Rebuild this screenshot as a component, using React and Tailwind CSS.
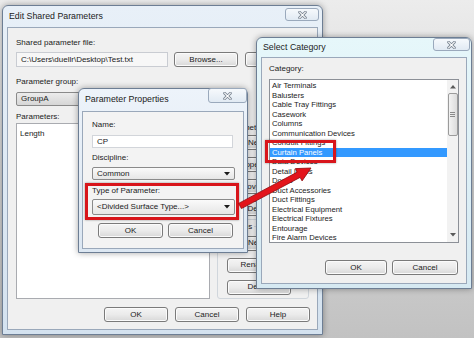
const categories = [
  'Air Terminals', 'Balusters', 'Cable Tray Fittings', 'Casework', 'Columns',
  'Communication Devices', 'Conduit Fittings', 'Curtain Panels', 'Data Devices',
  'Detail Items', 'Doors', 'Duct Accessories', 'Duct Fittings',
  'Electrical Equipment', 'Electrical Fixtures', 'Entourage', 'Fire Alarm Devices',
]

function CloseBtn({ className = '' }) {
  return (
    <div className={`absolute flex items-center justify-center rounded-[3px] border border-[#9aa9bc] bg-gradient-to-b from-[#f6f9fc] to-[#e1eaf3] ${className}`}>
      <svg width="9" height="8" viewBox="0 0 9 8">
        <path d="M1.6 1.2 L7.4 6.8 M7.4 1.2 L1.6 6.8" stroke="#7c8794" strokeWidth="2.8" strokeLinecap="round" />
        <path d="M1.6 1.2 L7.4 6.8 M7.4 1.2 L1.6 6.8" stroke="#ffffff" strokeWidth="1.1" strokeLinecap="round" />
      </svg>
    </div>
  )
}

function Btn({ children, className = '' }) {
  return (
    <div className={`flex shrink-0 items-center justify-center rounded-[3px] border border-[#7a7a7a] bg-gradient-to-b from-[#f4f4f4] via-[#ebebeb] to-[#d8d8d8] text-[8px] text-[#1b1b1b] shadow-[inset_0_0_0_1px_#fbfbfb] ${className}`}>
      {children}
    </div>
  )
}

function Caret() {
  return (
    <svg width="6" height="4" viewBox="0 0 6 4" className="mr-[4px] shrink-0">
      <path d="M0 0 H6 L3 3.5 Z" fill="#1b1b1b" />
    </svg>
  )
}

function Combo({ children, className = '', gray = false }) {
  return (
    <div className={`flex items-center justify-between rounded-[2px] border border-[#8a8a8a] ${gray ? 'bg-gradient-to-b from-[#ececec] to-[#d6d6d6]' : 'bg-gradient-to-b from-[#fafafa] to-[#e6e6e6]'} text-[8px] ${className}`}>
      <span className="pl-[4px]">{children}</span>
      <Caret />
    </div>
  )
}

function Label({ children, className = '' }) {
  return <div className={`h-[10px] text-[8px] leading-[10px] ${className}`}>{children}</div>
}

function EditSharedParameters() {
  return (
    <div className="absolute left-[2px] top-[5px] flex h-[330px] w-[321px] flex-col rounded-t-[6px] border border-[#6d7e94] bg-gradient-to-b from-[#e8f0f8] to-[#d4e2ef] shadow-[0_0_6px_rgba(0,0,0,0.35)]">
      <div className="flex h-[21px] items-center pl-[6px] text-[8.8px]">Edit Shared Parameters</div>
      <CloseBtn className="left-[282px] top-[2px] h-[13px] w-[34px]" />
      <div className="mx-[4px] mb-[4px] flex flex-1 flex-col border border-[#9aa8ba] bg-[#f0f0f0] pl-[8px] pr-[7px]">
        <Label className="mt-[10px]">Shared parameter file:</Label>
        <div className="mt-[4px] flex h-[15px]">
          <div className="flex w-[152px] items-center border border-[#c9ccd2] bg-[#f7f7f7] pl-[4px] text-[8px]">C:\Users\duellr\Desktop\Test.txt</div>
          <Btn className="ml-[6px] w-[64px]">Browse...</Btn>
          <Btn className="ml-[7px] w-[64px]">Create...</Btn>
        </div>
        <Label className="mt-[10px]">Parameter group:</Label>
        <Combo gray className="mt-[5px] h-[14px] w-[152px]">GroupA</Combo>
        <Label className="mt-[6px]">Parameters:</Label>
        <div className="mt-[1px] flex">
          <div className="h-[176px] w-[194px] border border-[#a9abb0] bg-white pl-[3px] pt-[4px] text-[8px]">Length</div>
          <div className="ml-[7px] flex h-[176px] w-[92px] flex-col">
            <fieldset className="h-[98px] rounded-[3px] border border-[#d0d6dc]">
              <legend className="ml-[6px] px-[2px] text-[8px] leading-[10px]">Parameters</legend>
              <div className="mt-[2px] flex flex-col gap-[7px] pl-[9px]">
                <Btn className="h-[15px] w-[64px]">New...</Btn>
                <Btn className="h-[15px] w-[64px]">Properties...</Btn>
                <Btn className="h-[15px] w-[64px]">Move To...</Btn>
                <Btn className="h-[15px] w-[64px]">Delete</Btn>
              </div>
            </fieldset>
            <fieldset className="mt-[2px] h-[78px] rounded-[3px] border border-[#d0d6dc]">
              <legend className="ml-[6px] px-[2px] text-[8px] leading-[10px]">Groups</legend>
              <div className="mt-[4px] flex flex-col gap-[7px] pl-[9px]">
                <Btn className="h-[15px] w-[64px]">New...</Btn>
                <Btn className="h-[15px] w-[64px]">Rename...</Btn>
                <Btn className="h-[15px] w-[64px]">Delete</Btn>
              </div>
            </fieldset>
          </div>
        </div>
        <div className="mt-[8px] flex h-[15px] justify-end gap-[7px]">
          <Btn className="w-[64px]">OK</Btn>
          <Btn className="w-[64px]">Cancel</Btn>
          <Btn className="w-[64px]">Help</Btn>
        </div>
      </div>
    </div>
  )
}

function ParameterProperties() {
  return (
    <div className="absolute left-[78px] top-[88px] flex h-[165px] w-[170px] flex-col rounded-t-[6px] border border-[#6d7e94] bg-gradient-to-b from-[#edf3fa] to-[#dce7f2] shadow-[0_0_6px_rgba(0,0,0,0.35)]">
      <div className="flex h-[22px] items-center pl-[6px] text-[8.8px]">Parameter Properties</div>
      <CloseBtn className="left-[129px] top-[-1px] h-[15px] w-[39px]" />
      <div className="mx-[3px] mb-[3px] flex flex-1 flex-col border border-[#9aa8ba] bg-[#f3f3f3] pl-[9px]">
        <Label className="mt-[8px]">Name:</Label>
        <div className="mt-[5px] flex h-[13px] w-[141px] items-center border border-[#d2d5da] bg-white pl-[4px] text-[8px]">CP</div>
        <Label className="mt-[5px]">Discipline:</Label>
        <Combo className="mt-[4px] h-[13px] w-[143px]">Common</Combo>
        <Label className="mt-[6px]">Type of Parameter:</Label>
        <Combo className="mt-[3px] h-[16px] w-[143px]">&lt;Divided Surface Type...&gt;</Combo>
        <div className="mt-[8px] flex h-[15px]">
          <Btn className="ml-[6px] w-[65px]">OK</Btn>
          <Btn className="ml-[5px] w-[65px]">Cancel</Btn>
        </div>
      </div>
      <div className="absolute left-[6px] top-[94px] h-[37px] w-[154px] border-[3px] border-[#d8151b] shadow-[0_0_2px_rgba(0,0,0,0.4)]" />
    </div>
  )
}

function SelectCategory() {
  return (
    <div className="absolute left-[256px] top-[37px] flex h-[252px] w-[216px] flex-col rounded-t-[6px] border border-[#6d7e94] bg-gradient-to-b from-[#e6f7fa] to-[#d6e9f2] shadow-[0_0_6px_rgba(0,0,0,0.35)]">
      <div className="flex h-[19px] items-center pl-[6px] text-[8.8px]">Select Category</div>
      <CloseBtn className="left-[176px] top-[0px] h-[13px] w-[37px]" />
      <div className="mx-[4px] mb-[4px] flex flex-1 flex-col border border-[#9aa8ba] bg-[#f0f0f0] pl-[7px] pr-[7px]">
        <Label className="mt-[6px]">Category:</Label>
        <div className="mt-[5px] flex h-[164px] w-[190px] border border-[#8c9097] bg-white">
          <div className="flex-1 pt-[1px] text-[7.7px] leading-[9px]">
            {categories.map((c) => (
              <div
                key={c}
                className={`h-[9.5px] overflow-hidden whitespace-nowrap pl-[2px] pt-[0.25px] ${c === 'Curtain Panels' ? 'bg-[#3399ff] text-white' : 'text-[#1b1b1b]'}`}
              >
                {c}
              </div>
            ))}
          </div>
          <div className="flex w-[11px] flex-col items-center bg-[#f2f2f2]">
            <svg width="6" height="4" viewBox="0 0 6 4" className="mt-[5px]">
              <path d="M0 3.5 H6 L3 0 Z" fill="#5a5a5a" />
            </svg>
            <div className="mt-[4px] flex h-[43px] w-[10px] flex-col items-center justify-center gap-[1px] rounded-[2px] border border-[#9b9b9b] bg-gradient-to-r from-[#f3f3f3] to-[#dcdcdc]">
              <div className="h-px w-[5px] bg-[#8a8a8a]" />
              <div className="h-px w-[5px] bg-[#8a8a8a]" />
              <div className="h-px w-[5px] bg-[#8a8a8a]" />
            </div>
            <div className="flex-1" />
            <svg width="6" height="4" viewBox="0 0 6 4" className="mb-[5px]">
              <path d="M0 0 H6 L3 3.5 Z" fill="#5a5a5a" />
            </svg>
          </div>
        </div>
        <div className="mt-[17px] flex h-[15px] justify-end gap-[5px] pr-[1px]">
          <Btn className="w-[62px]">OK</Btn>
          <Btn className="w-[66px]">Cancel</Btn>
        </div>
      </div>
      <div className="absolute left-[8px] top-[102px] h-[23px] w-[71px] border-[3px] border-[#d8151b] shadow-[0_0_2px_rgba(0,0,0,0.4)]" />
    </div>
  )
}

export default function App() {
  return (
    <div className="relative h-[338px] w-[474px] overflow-hidden bg-gradient-to-b from-[#ececec] via-[#d6d6d6] to-[#c2c2c2] font-['Liberation_Sans',Arial,sans-serif] text-[#1b1b1b]">
      <EditSharedParameters />
      <ParameterProperties />
      <SelectCategory />
      {/* red pointer arrow */}
      <svg className="pointer-events-none absolute left-0 top-0" width="474" height="338" viewBox="0 0 474 338">
        <polygon
          points="238.6,203.4 297.2,172.1 295.3,168.6 311,168 302.1,180.9 300.1,177.4 241.4,208.6"
          fill="#e3141b"
          stroke="#8e0d10"
          strokeWidth="0.8"
          strokeLinejoin="round"
        />
      </svg>
    </div>
  )
}
